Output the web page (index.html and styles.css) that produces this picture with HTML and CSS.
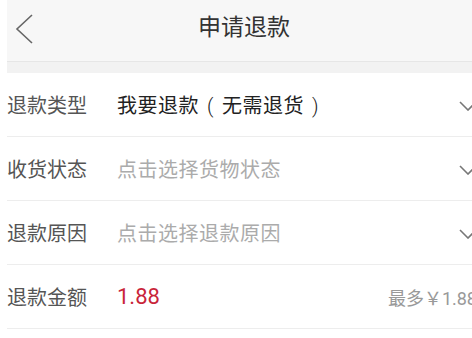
FILE: index.html
```html
<!DOCTYPE html>
<html lang="zh-CN">
<head>
    <meta charset="UTF-8">
    <meta name="viewport" content="width=device-width, initial-scale=1.0">
    <title>申请退款</title>
    <link rel="stylesheet" href="styles.css">
</head>
<body>
    <div class="page">
        <div class="header">
            <a class="back">
                <svg width="20" height="32" viewBox="0 0 20 32">
                    <polyline points="18,2 3,16 18,30" fill="none" stroke="#666" stroke-width="1.6"/>
                </svg>
            </a>
            <h1>申请退款</h1>
        </div>
        <div class="gap"></div>

        <div class="form">
            <div class="row">
                <span class="label">退款类型</span>
                <span class="value">我要退款<span class="paren">(</span>无需退货<span class="paren">)</span></span>
                <svg class="arrow" width="18" height="10" viewBox="0 0 18 10">
                    <polyline points="1,1 9,9 17,1" fill="none" stroke="#777" stroke-width="1.6"/>
                </svg>
            </div>
            <div class="row">
                <span class="label">收货状态</span>
                <span class="value placeholder">点击选择货物状态</span>
                <svg class="arrow" width="18" height="10" viewBox="0 0 18 10">
                    <polyline points="1,1 9,9 17,1" fill="none" stroke="#777" stroke-width="1.6"/>
                </svg>
            </div>
            <div class="row">
                <span class="label">退款原因</span>
                <span class="value placeholder">点击选择退款原因</span>
                <svg class="arrow" width="18" height="10" viewBox="0 0 18 10">
                    <polyline points="1,1 9,9 17,1" fill="none" stroke="#777" stroke-width="1.6"/>
                </svg>
            </div>
            <div class="row">
                <span class="label">退款金额</span>
                <span class="value amount">1.88</span>
                <span class="max">最多￥1.88</span>
            </div>
        </div>
    </div>
</body>
</html>
```

FILE: styles.css
```css
body {
    margin: 0;
    background-color: #FFFFFF;
    font-family: Roboto, "Noto Sans CJK SC", sans-serif;
    overflow: hidden;
}

.page {
    width: 480px;
    margin-left: 7px;
}

.header {
    height: 61px;
    background-color: #F7F7F7;
    border-bottom: 1px solid #E6E6E6;
    display: flex;
    align-items: center;
    position: relative;
}

.back {
    display: flex;
    margin-left: 7px;
    margin-top: -4px;
}

.header h1 {
    position: absolute;
    left: 0;
    width: 474px;
    top: 0;
    margin: 0;
    line-height: 56px;
    text-align: center;
    font-size: 23px;
    font-weight: normal;
    color: #333333;
}

.gap {
    height: 11px;
    background-color: #F2F2F2;
}

.form {
    padding-right: 10px;
}

.row {
    display: flex;
    align-items: center;
    height: 63px;
    border-bottom: 1px solid #EDEDED;
}

.label {
    width: 110px;
    font-size: 20px;
    color: #555555;
}

.value {
    flex: 1;
    font-size: 20px;
    letter-spacing: 0.5px;
    color: #222222;
}

.paren {
    display: inline-block;
    width: 23px;
    text-align: center;
    font-weight: 300;
}

.value.placeholder {
    color: #ABABAB;
}

.value.amount {
    color: #C9253A;
    font-size: 22px;
    letter-spacing: 0;
}

.arrow {
    margin-top: 2px;
}

.max {
    font-size: 18px;
    color: #999999;
}
```
